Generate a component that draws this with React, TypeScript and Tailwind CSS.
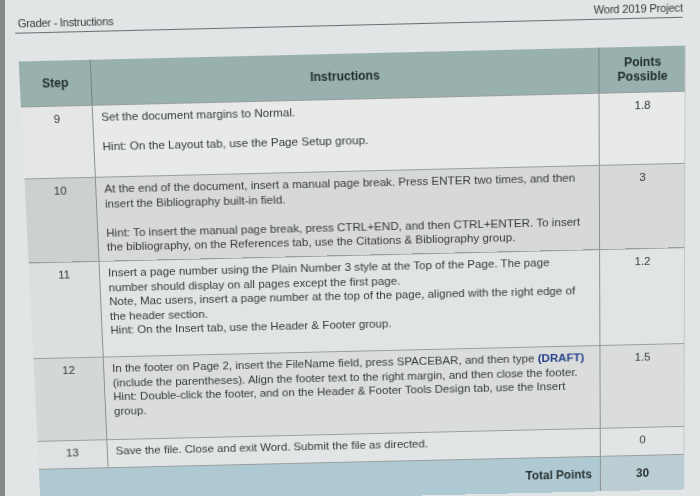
import type { ReactNode } from "react";

type Row = {
  step: string;
  points: string;
  height: string;
  bg: string;
  stepBg: string;
  body: ReactNode;
};

const rows: Row[] = [
  {
    step: "9",
    points: "1.8",
    height: "h-[71px]",
    bg: "bg-[#e8eaea]",
    stepBg: "bg-[#e5e7e7]",
    body: (
      <>
        Set the document margins to Normal.
        <br />
        <br />
        Hint: On the Layout tab, use the Page Setup group.
      </>
    ),
  },
  {
    step: "10",
    points: "3",
    height: "h-[84px]",
    bg: "bg-[#d6d9d5]",
    stepBg: "bg-[#cdd1cd]",
    body: (
      <>
        At the end of the document, insert a manual page break. Press ENTER two times, and then
        <br />
        insert the Bibliography built-in field.
        <br />
        <br />
        Hint: To insert the manual page break, press CTRL+END, and then CTRL+ENTER. To insert
        <br />
        the bibliography, on the References tab, use the Citations &amp; Bibliography group.
      </>
    ),
  },
  {
    step: "11",
    points: "1.2",
    height: "h-[97px]",
    bg: "bg-[#e1e4e4]",
    stepBg: "bg-[#dcdfdf]",
    body: (
      <>
        Insert a page number using the Plain Number 3 style at the Top of the Page. The page
        <br />
        number should display on all pages except the first page.
        <br />
        Note, Mac users, insert a page number at the top of the page, aligned with the right edge of
        <br />
        the header section.
        <br />
        Hint: On the Insert tab, use the Header &amp; Footer group.
      </>
    ),
  },
  {
    step: "12",
    points: "1.5",
    height: "h-[85px]",
    bg: "bg-[#dadddc]",
    stepBg: "bg-[#d3d7d6]",
    body: (
      <>
        In the footer on Page 2, insert the FileName field, press SPACEBAR, and then type{" "}
        <span className="font-bold text-[#23418a]">(DRAFT)</span>
        <br />
        (include the parentheses). Align the footer text to the right margin, and then close the footer.
        <br />
        Hint: Double-click the footer, and on the Header &amp; Footer Tools Design tab, use the Insert
        <br />
        group.
      </>
    ),
  },
  {
    step: "13",
    points: "0",
    height: "h-[29px]",
    bg: "bg-[#e2e5e6]",
    stepBg: "bg-[#dfe2e3]",
    body: <>Save the file. Close and exit Word. Submit the file as directed.</>,
  },
];

function TableRow({ row }: { row: Row }) {
  return (
    <div
      className={`grid grid-cols-[70px_501px_86px] border-t border-[#9a9e9e] ${row.height} ${row.bg}`}
    >
      <div className={`pt-[5px] text-center ${row.stepBg}`}>{row.step}</div>
      <div className="whitespace-nowrap border-l border-[#8c9090] pl-[8px] pt-[4px]">
        {row.body}
      </div>
      <div className="border-l border-[#8c9090] pt-[5px] text-center">{row.points}</div>
    </div>
  );
}

export default function App() {
  return (
    <div className="flex h-[496px] w-[700px] overflow-hidden bg-[#e2e5e6] font-['Liberation_Sans',Arial,sans-serif] text-[11.6px] leading-[14.6px] text-[#383b3b]">
      {/* monitor bezel at the photo's left edge */}
      <div className="w-[5px] shrink-0 bg-[#868a8b]" />

      <div className="h-full w-[695px] shrink-0 origin-[345px_248px] [transform:perspective(1000px)_rotateX(-4.6deg)_rotate(-1.35deg)]">
        <div className="ml-[21px] mr-[18px] flex items-end justify-between border-b border-[#6c7072] pb-[2px] pl-[3px] pt-[12px] text-[11px] leading-[14px]">
          <span className="tracking-[-0.3px]">Grader - Instructions</span>
          <span className="tracking-[-0.2px]">Word 2019 Project</span>
        </div>

        <div className="ml-[23px] mt-[27px] w-[657px] border-r border-[#c3c7c7]">
          <div className="grid h-[44px] grid-cols-[70px_501px_86px] bg-[#99b1ae] text-[12px] font-bold leading-[14px] text-[#1f2b2a]">
            <div className="flex items-center justify-center">Step</div>
            <div className="flex items-center justify-center border-l border-[#6f8784]">
              Instructions
            </div>
            <div className="flex items-center justify-center border-l border-[#6f8784] text-center">
              Points
              <br />
              Possible
            </div>
          </div>

          {rows.map((r) => (
            <TableRow key={r.step} row={r} />
          ))}

          <div className="grid h-[37px] grid-cols-[571px_86px] border-t border-[#9a9e9e] text-[12px] font-bold text-[#2a3333]">
            <div className="flex items-center justify-end bg-[#aec9d1] pr-[8px]">
              Total Points
            </div>
            <div className="flex items-center justify-center border-l border-[#8c9090] bg-[#bacdd2]">
              30
            </div>
          </div>
        </div>
      </div>
    </div>
  );
}
